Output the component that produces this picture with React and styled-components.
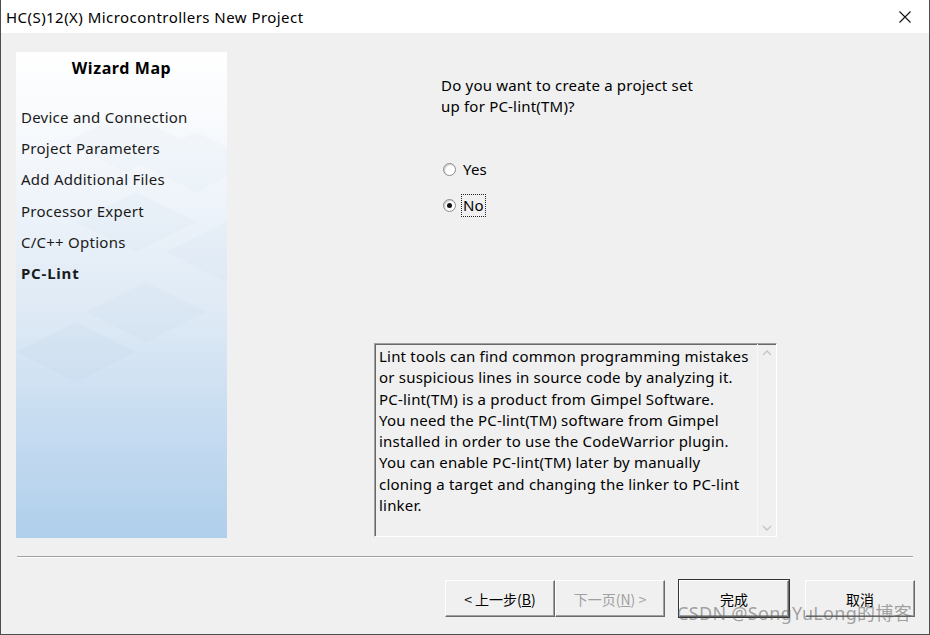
import React from "react";
import styled, { createGlobalStyle } from "styled-components";

const GlobalStyle = createGlobalStyle`
  html, body {
    margin: 0;
    padding: 0;
    background: #f0f0f0;
  }
  body {
    font-family: "Noto Sans", "Noto Sans CJK SC", sans-serif;
  }
`;

const Window = styled("div")`
  position: relative;
  width: 930px;
  height: 635px;
  box-sizing: border-box;
  border: 1px solid #4d4d4d;
  border-top: none;
  background: #f0f0f0;
  display: flex;
  flex-direction: column;
  overflow: hidden;
`;

const TitleBar = styled("div")`
  height: 33px;
  background: #ffffff;
  display: flex;
  align-items: center;
  justify-content: space-between;
  padding-left: 5px;
  font-size: 15px;
  letter-spacing: 0.45px;
  color: #000;
`;

const CloseButton = styled("div")`
  width: 46px;
  height: 33px;
  display: flex;
  align-items: center;
  justify-content: center;
  margin-right: 1px;
`;

const Body = styled("div")`
  flex: 1;
  display: flex;
  flex-direction: column;
  padding: 19px 14px 0 15px;
`;

const Content = styled("div")`
  display: flex;
  height: 486px;
`;

const Sidebar = styled("div")`
  position: relative;
  width: 211px;
  background: linear-gradient(180deg, #ffffff 0%, #f2f6fb 25%, #dde9f5 55%, #c3daf0 80%, #b0cfeb 100%);
  overflow: hidden;
`;

const SidebarTitle = styled("div")`
  position: relative;
  text-align: center;
  font-weight: 700;
  font-size: 16px;
  letter-spacing: 0.6px;
  padding-top: 5px;
  height: 46px;
  color: #000;
`;

const StepList = styled("ul")`
  position: relative;
  list-style: none;
  margin: 0;
  padding: 0 0 0 5px;
`;

const Step = styled("li")`
  font-size: 15px;
  letter-spacing: ${(p) => (p.$active ? "0.8px" : "0.25px")};
  height: 31.2px;
  line-height: 29px;
  color: #1a1a1a;
  font-weight: ${(p) => (p.$active ? 700 : 400)};
`;

const Diamonds = styled("svg")`
  position: absolute;
  left: 0;
  top: 0;
`;

const Main = styled("div")`
  flex: 1;
  display: flex;
  flex-direction: column;
`;

const Question = styled("p")`
  margin: 23px 0 0 214px;
  width: 275px;
  font-size: 15px;
  letter-spacing: 0.2px;
  line-height: 21px;
  color: #000;
`;

const RadioGroup = styled("div")`
  margin: 41px 0 0 216px;
  display: flex;
  flex-direction: column;
  gap: 13px;
`;

const RadioRow = styled("label")`
  display: flex;
  align-items: center;
  gap: 6px;
  font-size: 15px;
  letter-spacing: 0.2px;
  height: 23px;
  color: #000;
`;

const RadioCircle = styled("span")`
  width: 11px;
  height: 11px;
  border-radius: 50%;
  border: 1px solid #8a8a8a;
  background: #fff;
  display: flex;
  align-items: center;
  justify-content: center;
  box-shadow: inset 1px 1px 1px #c8c8c8;

  &::after {
    content: "";
    width: 5px;
    height: 5px;
    border-radius: 50%;
    background: ${(p) => (p.$checked ? "#111" : "transparent")};
  }
`;

const RadioLabel = styled("span")`
  padding: 0 1px;
  height: 21px;
  line-height: 21px;
  outline: ${(p) => (p.$focused ? "1px dotted #222" : "none")};
`;

const InfoBox = styled("div")`
  margin: auto 0 1px 147px;
  width: 403px;
  height: 194px;
  box-sizing: border-box;
  border-top: 1px solid #a0a0a0;
  border-left: 1px solid #a0a0a0;
  border-right: 1px solid #ffffff;
  border-bottom: 1px solid #ffffff;
  box-shadow: inset 1px 1px 0 #696969;
  display: flex;
  background: #f0f0f0;
`;

const InfoText = styled("div")`
  flex: 1;
  padding: 2px 0 0 4px;
  font-size: 15px;
  letter-spacing: 0.2px;
  line-height: 21.3px;
  color: #000;
  white-space: pre-line;
`;

const Scrollbar = styled("div")`
  width: 18px;
  display: flex;
  flex-direction: column;
  justify-content: space-between;
  align-items: center;
  padding: 6px 0 5px;
  border-left: 1px solid #f8f8f8;
`;

const Separator = styled("div")`
  margin: 18px 0 0 1px;
  width: 896px;
  height: 1px;
  background: #a0a0a0;
  border-bottom: 1px solid #ffffff;
`;

const ButtonBar = styled("div")`
  display: flex;
  justify-content: flex-end;
  margin-top: 22px;
`;

const Button = styled("button")`
  width: 110px;
  height: 37px;
  box-sizing: border-box;
  background: #f0f0f0;
  font-family: "Noto Sans CJK SC", "Noto Sans", sans-serif;
  font-size: 14px;
  color: ${(p) => (p.disabled ? "#a0a0a0" : "#000")};
  border-top: 1px solid #ffffff;
  border-left: 1px solid #ffffff;
  border-right: 1px solid #696969;
  border-bottom: 1px solid #696969;
  box-shadow: inset -1px -1px 0 #a0a0a0, ${(p) => (p.$default ? "0 0 0 1px #333" : "0 0 0 0 transparent")};
  margin-left: ${(p) => p.$gap || 0}px;
  padding: 0;
  white-space: pre;

  u {
    text-decoration: underline;
  }
`;

const Watermark = styled("div")`
  position: absolute;
  right: 17px;
  bottom: 10px;
  font-family: "Noto Sans", "Noto Sans CJK SC", sans-serif;
  font-size: 18px;
  line-height: 22px;
  color: rgba(90, 90, 90, 0.55);
  letter-spacing: 0.3px;
  pointer-events: none;
`;

const steps = [
  "Device and Connection",
  "Project Parameters",
  "Add Additional Files",
  "Processor Expert",
  "C/C++ Options",
  "PC-Lint",
];

const infoText = `Lint tools can find common programming mistakes
or suspicious lines in source code by analyzing it.
PC-lint(TM) is a product from Gimpel Software.
You need the PC-lint(TM) software from Gimpel
installed in order to use the CodeWarrior plugin.
You can enable PC-lint(TM) later by manually
cloning a target and changing the linker to PC-lint
linker.`;

function Chevron({ up }) {
  return (
    <svg width="10" height="6" viewBox="0 0 10 6">
      <path
        d={up ? "M1 5 L5 1 L9 5" : "M1 1 L5 5 L9 1"}
        fill="none"
        stroke="#c4c4c4"
        strokeWidth="1.4"
      />
    </svg>
  );
}

export default function App() {
  return (
    <>
      <GlobalStyle />
      <Window>
        <TitleBar>
          <span>HC(S)12(X) Microcontrollers New Project</span>
          <CloseButton>
            <svg width="12" height="12" viewBox="0 0 12 12">
              <path d="M0.5 0.5 L11.5 11.5 M11.5 0.5 L0.5 11.5" stroke="#111" strokeWidth="1.1" />
            </svg>
          </CloseButton>
        </TitleBar>
        <Body>
          <Content>
            <Sidebar>
              <Diamonds width="211" height="486" viewBox="0 0 211 486">
                <g fill="#8fb3d6" opacity="0.04">
                  <path d="M50 90 L110 60 L170 90 L110 120 Z" />
                  <path d="M120 110 L180 80 L240 110 L180 140 Z" />
                  <path d="M60 170 L120 140 L180 170 L120 200 Z" />
                  <path d="M150 200 L210 170 L270 200 L210 230 Z" />
                  <path d="M70 260 L130 230 L190 260 L130 290 Z" />
                  <path d="M0 300 L60 270 L120 300 L60 330 Z" />
                </g>
              </Diamonds>
              <SidebarTitle>Wizard Map</SidebarTitle>
              <StepList>
                {steps.map((s, i) => (
                  <Step key={s} $active={i === steps.length - 1}>
                    {s}
                  </Step>
                ))}
              </StepList>
            </Sidebar>
            <Main>
              <Question>Do you want to create a project set up for PC-lint(TM)?</Question>
              <RadioGroup>
                <RadioRow>
                  <RadioCircle />
                  <RadioLabel>Yes</RadioLabel>
                </RadioRow>
                <RadioRow>
                  <RadioCircle $checked />
                  <RadioLabel $focused>No</RadioLabel>
                </RadioRow>
              </RadioGroup>
              <InfoBox>
                <InfoText>{infoText}</InfoText>
                <Scrollbar>
                  <Chevron up />
                  <Chevron />
                </Scrollbar>
              </InfoBox>
            </Main>
          </Content>
          <Separator />
          <ButtonBar>
            <Button>
              {"< 上一步("}<u>B</u>)
            </Button>
            <Button disabled>
              下一页(<u>N</u>){" >"}
            </Button>
            <Button $default $gap={14}>
              完成
            </Button>
            <Button $gap={16}>取消</Button>
          </ButtonBar>
        </Body>
        <Watermark>CSDN @SongYuLong的博客</Watermark>
      </Window>
    </>
  );
}
